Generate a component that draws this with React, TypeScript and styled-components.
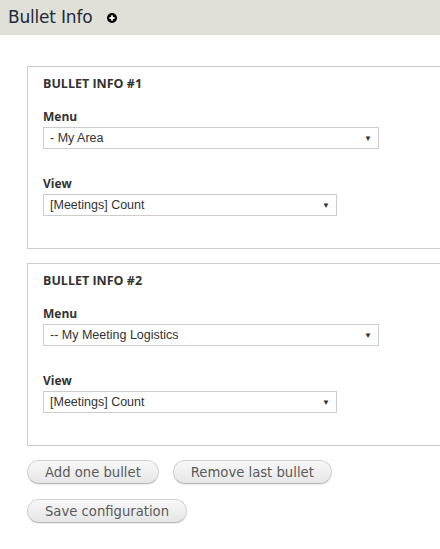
import React from 'react'
import styled, { createGlobalStyle } from 'styled-components'

const GlobalStyle = createGlobalStyle`
  html, body {
    margin: 0;
    padding: 0;
    background: #fff;
    overflow: hidden;
  }
  body {
    font-family: "DejaVu Sans", Verdana, sans-serif;
  }
`

const Page = styled.div`
  width: 440px;
  height: 549px;
  overflow: hidden;
`

const Header = styled.div`
  height: 35px;
  background: #e0e0d8;
  display: flex;
  align-items: center;
  padding-left: 8px;
  gap: 15px;
`

const Title = styled.h1`
  margin: 0;
  font-family: "DejaVu Sans", Verdana, sans-serif;
  font-weight: normal;
  font-size: 17px;
  color: #1f2a3c;
  line-height: 1;
  letter-spacing: -0.2px;
`

const Body = styled.div`
  padding: 31px 0 0 27px;
  width: 480px;
`

const Fieldset = styled.fieldset`
  margin: 0 0 14px;
  padding: 0 15px;
  height: 183px;
  box-sizing: border-box;
  border: 1px solid #ccc;
  min-width: 0;
`

const Legend = styled.div`
  font-family: "Open Sans", "Liberation Sans", sans-serif;
  font-weight: 700;
  font-size: 12.5px;
  text-transform: uppercase;
  color: #333;
  padding-top: 8px;
  height: 32px;
  box-sizing: border-box;
`

const Field = styled.div`
  margin-top: 10px;
  margin-bottom: 27px;
`

const Label = styled.div`
  font-family: "Open Sans", "Liberation Sans", sans-serif;
  font-weight: 700;
  font-size: 12px;
  color: #333;
  line-height: 16px;
  margin-bottom: 2px;
`

const Select = styled.div<{ $width: number }>`
  width: ${(p) => p.$width}px;
  height: 22px;
  box-sizing: border-box;
  border: 1px solid #ccc;
  background: #fff;
  display: flex;
  align-items: center;
  justify-content: space-between;
  padding: 0 6px 0 6px;
  font-family: "Liberation Sans", Arial, sans-serif;
  font-size: 12.5px;
  color: #333;
`

const Arrow = styled.span`
  font-size: 8px;
  color: #333;
`

const ButtonRow = styled.div`
  display: flex;
  gap: 14px;
  margin-bottom: 15px;
`

const Button = styled.button`
  height: 24px;
  padding: 0 17px;
  border: 1px solid #d2d2d2;
  border-bottom-color: #b8b8b8;
  border-radius: 20px;
  background: linear-gradient(#f8f8f8, #e6e6e6);
  box-shadow: 0 1px 1px rgba(0, 0, 0, 0.08);
  font-family: "DejaVu Sans", Verdana, sans-serif;
  font-size: 13.2px;
  color: #5a5a5a;
  cursor: pointer;
`

const PlusIcon = () => (
  <svg width="10" height="10" viewBox="0 0 10 10">
    <circle cx="5" cy="5" r="5" fill="#000" />
    <rect x="2.3" y="4.1" width="5.4" height="1.8" fill="#fff" />
    <rect x="4.1" y="2.3" width="1.8" height="5.4" fill="#fff" />
  </svg>
)

const bullets = [
  { n: 1, menu: '- My Area', view: '[Meetings] Count' },
  { n: 2, menu: '-- My Meeting Logistics', view: '[Meetings] Count' },
]

export default function App() {
  return (
    <Page>
      <GlobalStyle />
      <Header>
        <Title>Bullet Info</Title>
        <PlusIcon />
      </Header>
      <Body>
        {bullets.map((b) => (
          <Fieldset key={b.n}>
            <Legend>Bullet Info #{b.n}</Legend>
            <Field>
              <Label>Menu</Label>
              <Select $width={336}>
                <span>{b.menu}</span>
                <Arrow>▼</Arrow>
              </Select>
            </Field>
            <Field>
              <Label>View</Label>
              <Select $width={294}>
                <span>{b.view}</span>
                <Arrow>▼</Arrow>
              </Select>
            </Field>
          </Fieldset>
        ))}
        <ButtonRow>
          <Button>Add one bullet</Button>
          <Button>Remove last bullet</Button>
        </ButtonRow>
        <ButtonRow>
          <Button>Save configuration</Button>
        </ButtonRow>
      </Body>
    </Page>
  )
}
